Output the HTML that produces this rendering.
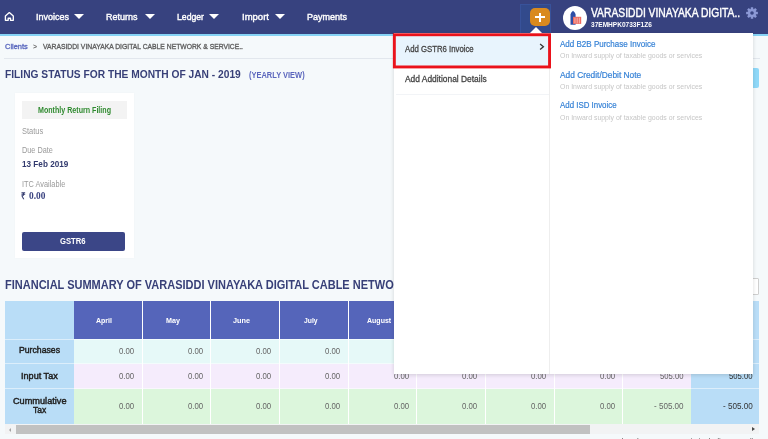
<!DOCTYPE html>
<html><head><meta charset="utf-8"><title>GSTR6 Dashboard</title>
<style>
*{box-sizing:border-box;margin:0;padding:0}
html,body{width:768px;height:439px;overflow:hidden}
body{background:#f5f9fb;font-family:"Liberation Sans",sans-serif;position:relative}
#root{position:absolute;left:0;top:0;width:768px;height:439px;overflow:hidden;will-change:transform}
.a{position:absolute}
.t{position:absolute;white-space:nowrap;line-height:1;transform-origin:0 50%;font-weight:bold}
.tri{position:absolute;width:0;height:0;border-left:5.2px solid transparent;border-right:5.2px solid transparent;border-top:5.8px solid #fff;top:14px}
</style></head><body>
<div id="root">
<div class="a" style="left:0;top:0;width:768px;height:33.7px;background:#37427f"></div>
<div class="a" style="left:0;top:33.7px;width:768px;height:2.8px;background:#86d3f5"></div>
<svg class="a" style="left:3px;top:10px" width="13" height="13" viewBox="3 10 13 13"><path d="M5.4 20.3 V16 L9.35 12.6 L13.3 16 V20.3 H10.5 V18.2 H8.2 V20.3 Z" fill="none" stroke="#fff" stroke-width="1.35" stroke-linejoin="round"/></svg>
<div class="tri" style="left:74px"></div>
<div class="tri" style="left:144.5px"></div>
<div class="tri" style="left:209px"></div>
<div class="tri" style="left:275px"></div>
<div class="a" style="left:520px;top:4px;width:31.4px;height:30px;background:#324a8c;border:1px solid #38529a;border-bottom:0"></div>
<div class="a" style="left:530px;top:7.8px;width:20px;height:18.6px;background:#d98a1e;border-radius:5px"></div>
<div class="a" style="left:535.3px;top:16.1px;width:9.8px;height:2.2px;background:#fff"></div>
<div class="a" style="left:539.1px;top:12.8px;width:2.2px;height:8.8px;background:#fff"></div>
<div class="a" style="left:563.4px;top:6.1px;width:24px;height:24px;border-radius:50%;background:#fff"></div>
<svg class="a" style="left:563.4px;top:6.1px" width="24" height="24" viewBox="563.4 6.1 24 24"><path d="M570.9 24.8 V14.6 Q570.9 13 573.4 10.9 Q576 13 576 14.6 V24.8 Z" fill="#2f4ea6"/><rect x="573.4" y="16.9" width="8.2" height="7.1" fill="#ee6a5f"/><rect x="574.9" y="17.8" width="0.9" height="5.6" fill="#fff" opacity=".55"/><rect x="577.1" y="17.8" width="0.9" height="5.6" fill="#fff" opacity=".55"/><rect x="579.3" y="17.8" width="0.9" height="5.6" fill="#fff" opacity=".55"/></svg>
<svg class="a" style="left:745.6px;top:6.7px" width="12" height="12" viewBox="-6 -6 12 12"><g fill="#8c99d6"><rect x="-1.25" y="-5.85" width="2.5" height="3" rx=".5" transform="rotate(0)"/><rect x="-1.25" y="-5.85" width="2.5" height="3" rx=".5" transform="rotate(45)"/><rect x="-1.25" y="-5.85" width="2.5" height="3" rx=".5" transform="rotate(90)"/><rect x="-1.25" y="-5.85" width="2.5" height="3" rx=".5" transform="rotate(135)"/><rect x="-1.25" y="-5.85" width="2.5" height="3" rx=".5" transform="rotate(180)"/><rect x="-1.25" y="-5.85" width="2.5" height="3" rx=".5" transform="rotate(225)"/><rect x="-1.25" y="-5.85" width="2.5" height="3" rx=".5" transform="rotate(270)"/><rect x="-1.25" y="-5.85" width="2.5" height="3" rx=".5" transform="rotate(315)"/><circle r="4.1"/></g><circle r="1.8" fill="#3a4684"/></svg>
<div class="a" style="left:4px;top:57.8px;width:756px;height:1px;background:#e2e7ed"></div>
<div class="a" style="left:15px;top:93.4px;width:119.2px;height:164.2px;background:#fff;box-shadow:0 0 2px rgba(120,140,160,.04)"></div>
<div class="a" style="left:21.7px;top:101px;width:105.3px;height:17.5px;background:#f3f3f3"></div>
<div class="a" style="left:21.7px;top:232.3px;width:103.3px;height:18.3px;background:#3b4687;border-radius:2px"></div>
<div class="a" style="left:753px;top:68px;width:6px;height:20px;background:#8fd8f8;border-radius:0 2px 2px 0"></div>
<div class="a" style="left:700px;top:278px;width:59.3px;height:17px;background:#fff;border:1px solid #cfcfcf;border-radius:1px"></div>
<div class="a" style="left:5px;top:301px;width:68.5px;height:122.7px;background:#b9ddf7"></div>
<div class="a" style="left:73.5px;top:301px;width:685.5px;height:38.0px;background:#5565ba"></div>
<div class="a" style="left:73.5px;top:339.0px;width:685.5px;height:24.8px;background:#e6f9f8"></div>
<div class="a" style="left:73.5px;top:363.8px;width:685.5px;height:24.9px;background:#f5ecfc"></div>
<div class="a" style="left:73.5px;top:388.7px;width:685.5px;height:35.0px;background:#dcf6dc"></div>
<div class="a" style="left:691.4px;top:301px;width:67.6px;height:122.7px;background:#b9ddf7"></div>
<div class="a" style="left:5px;top:338.5px;width:754px;height:1px;background:rgba(255,255,255,.5)"></div>
<div class="a" style="left:5px;top:363.3px;width:754px;height:1px;background:rgba(255,255,255,.5)"></div>
<div class="a" style="left:5px;top:388.2px;width:754px;height:1px;background:rgba(255,255,255,.5)"></div>
<div class="a" style="left:141.7px;top:301px;width:1px;height:122.7px;background:#fff"></div>
<div class="a" style="left:210.3px;top:301px;width:1px;height:122.7px;background:#fff"></div>
<div class="a" style="left:279.0px;top:301px;width:1px;height:122.7px;background:#fff"></div>
<div class="a" style="left:347.6px;top:301px;width:1px;height:122.7px;background:#fff"></div>
<div class="a" style="left:416.2px;top:301px;width:1px;height:122.7px;background:#fff"></div>
<div class="a" style="left:484.9px;top:301px;width:1px;height:122.7px;background:#fff"></div>
<div class="a" style="left:553.6px;top:301px;width:1px;height:122.7px;background:#fff"></div>
<div class="a" style="left:622.2px;top:301px;width:1px;height:122.7px;background:#fff"></div>
<div class="a" style="left:5px;top:423.7px;width:754px;height:10.8px;background:#f2f3f4"></div>
<div class="a" style="left:16.1px;top:425.1px;width:574px;height:8.7px;background:#c1c1c1"></div>
<div class="a" style="left:9.2px;top:427.5px;width:0;height:0;border-top:2.2px solid transparent;border-bottom:2.2px solid transparent;border-right:2.6px solid #a3a3a3"></div>
<div class="a" style="left:752.3px;top:426.6px;width:0;height:0;border-top:2.8px solid transparent;border-bottom:2.8px solid transparent;border-left:3px solid #484848"></div>
<div class="t" id="n1" style="left:36.00px;top:12.01px;font-size:9.5px;color:#fff;font-weight:normal;-webkit-text-stroke:.4px #fff;transform:scaleX(0.9467);">Invoices</div>
<div class="t" id="n2" style="left:106.00px;top:12.01px;font-size:9.5px;color:#fff;font-weight:normal;-webkit-text-stroke:.4px #fff;transform:scaleX(0.9469);">Returns</div>
<div class="t" id="n3" style="left:177.00px;top:12.01px;font-size:9.5px;color:#fff;font-weight:normal;-webkit-text-stroke:.4px #fff;transform:scaleX(0.9124);">Ledger</div>
<div class="t" id="n4" style="left:242.00px;top:12.01px;font-size:9.5px;color:#fff;font-weight:normal;-webkit-text-stroke:.4px #fff;transform:scaleX(1.0023);">Import</div>
<div class="t" id="n5" style="left:307.00px;top:12.01px;font-size:9.5px;color:#fff;font-weight:normal;-webkit-text-stroke:.4px #fff;transform:scaleX(0.9467);">Payments</div>
<div class="t" id="cname" style="left:590.50px;top:7.02px;font-size:12.2px;color:#fff;font-weight:normal;-webkit-text-stroke:.42px #fff;transform:scaleX(0.8452);">VARASIDDI VINAYAKA DIGITA..</div>
<div class="t" id="gstin" style="left:590.50px;top:20.80px;font-size:7.4px;color:#fff;transform:scaleX(0.8862);">37EMHPK0733F1Z6</div>
<div class="t" id="b1" style="left:4.70px;top:43.20px;font-size:7.8px;color:#5c6abf;font-weight:normal;-webkit-text-stroke:.35px #5c6abf;transform:scaleX(0.9562);">Clients</div>
<div class="t" id="b2" style="left:33.30px;top:43.01px;font-size:7px;color:#666;transform:scaleX(0.9771);">&gt;</div>
<div class="t" id="b3" style="left:43.00px;top:43.20px;font-size:7.8px;color:#606060;font-weight:normal;-webkit-text-stroke:.35px #606060;transform:scaleX(0.8682);">VARASIDDI VINAYAKA DIGITAL CABLE NETWORK &amp; SERVICE..</div>
<div class="t" id="h1a" style="left:5.00px;top:68.51px;font-size:11.8px;color:#384078;transform:scaleX(0.8662);">FILING STATUS FOR THE MONTH OF JAN - 2019</div>
<div class="t" id="yv" style="left:248.75px;top:70.51px;font-size:8.7px;color:#5b66bd;transform:scaleX(0.8603);">(YEARLY VIEW)</div>
<div class="t" id="h1b" style="left:5.00px;top:279.11px;font-size:12.8px;color:#384078;transform:scaleX(0.8601);">FINANCIAL SUMMARY OF VARASIDDI VINAYAKA DIGITAL CABLE NETWORK &amp; SERVICES</div>
<div class="t" id="mrf" style="left:38.00px;top:105.71px;font-size:8.6px;color:#2f8a2f;transform:scaleX(0.8265);">Monthly Return Filing</div>
<div class="t" id="st" style="left:21.70px;top:128.21px;font-size:8.2px;color:#9a9a9a;font-weight:normal;transform:scaleX(0.9174);">Status</div>
<div class="t" id="ddl" style="left:21.70px;top:147.21px;font-size:8.2px;color:#9a9a9a;font-weight:normal;transform:scaleX(0.8903);">Due Date</div>
<div class="t" id="dd" style="left:21.70px;top:158.90px;font-size:9.5px;color:#323a6e;transform:scaleX(0.8594);">13 Feb 2019</div>
<div class="t" id="itl" style="left:21.70px;top:180.71px;font-size:8.2px;color:#9a9a9a;font-weight:normal;transform:scaleX(0.9003);">ITC Available</div>
<div class="t" id="itc1" style="left:21.20px;top:191.76px;font-size:9.2px;color:#323a6e;transform:scaleX(0.8800);">₹</div>
<div class="t" id="itc2" style="left:29.00px;top:190.76px;font-size:10.4px;color:#3a4380;font-family:'Liberation Serif','DejaVu Serif',serif;transform:scaleX(0.9017);">0.00</div>
<div class="t" id="gbtn" style="left:60.40px;top:237.41px;font-size:8.8px;color:#fff;transform:scaleX(0.8724);">GSTR6</div>
<div class="t" id="mo0" style="left:96.00px;top:316.52px;font-size:8.1px;color:#fff;transform:scaleX(0.8678);">April</div>
<div class="t" id="mo1" style="left:166.25px;top:316.52px;font-size:8.1px;color:#fff;transform:scaleX(0.8857);">May</div>
<div class="t" id="mo2" style="left:233.00px;top:316.52px;font-size:8.1px;color:#fff;transform:scaleX(0.8992);">June</div>
<div class="t" id="mo3" style="left:303.60px;top:316.52px;font-size:8.1px;color:#fff;transform:scaleX(0.8393);">July</div>
<div class="t" id="mo4" style="left:366.70px;top:316.52px;font-size:8.1px;color:#fff;transform:scaleX(0.8682);">August</div>
<div class="t" id="mx0" style="left:431.78px;top:316.52px;font-size:8.1px;color:#fff;transform:scaleX(0.7647);">September</div>
<div class="t" id="mx1" style="left:500.43px;top:316.52px;font-size:8.1px;color:#fff;transform:scaleX(1.0307);">October</div>
<div class="t" id="mx2" style="left:569.08px;top:316.52px;font-size:8.1px;color:#fff;transform:scaleX(0.8082);">November</div>
<div class="t" id="mx3" style="left:637.73px;top:316.52px;font-size:8.1px;color:#fff;transform:scaleX(0.8172);">December</div>
<div class="t" id="r1" style="left:19.00px;top:346.41px;font-size:9.1px;color:#222;font-weight:normal;-webkit-text-stroke:.45px #222;transform:scaleX(0.9542);">Purchases</div>
<div class="t" id="r2" style="left:21.20px;top:371.91px;font-size:9.1px;color:#222;font-weight:normal;-webkit-text-stroke:.45px #222;transform:scaleX(1.0014);">Input Tax</div>
<div class="t" id="r3a" style="left:12.50px;top:396.80px;font-size:9.1px;color:#222;font-weight:normal;-webkit-text-stroke:.45px #222;transform:scaleX(1.0082);">Cummulative</div>
<div class="t" id="r3b" style="left:32.90px;top:406.41px;font-size:9.1px;color:#222;font-weight:normal;-webkit-text-stroke:.45px #222;transform:scaleX(0.9325);">Tax</div>
<div class="t" id="va0" style="left:118.95px;top:347.01px;font-size:8.3px;color:#666;font-weight:normal;transform:scaleX(0.9408);">0.00</div>
<div class="t" id="va1" style="left:187.60px;top:347.01px;font-size:8.3px;color:#666;font-weight:normal;transform:scaleX(0.9408);">0.00</div>
<div class="t" id="va2" style="left:256.25px;top:347.01px;font-size:8.3px;color:#666;font-weight:normal;transform:scaleX(0.9408);">0.00</div>
<div class="t" id="va3" style="left:324.90px;top:347.01px;font-size:8.3px;color:#666;font-weight:normal;transform:scaleX(0.9408);">0.00</div>
<div class="t" id="va4" style="left:393.55px;top:347.01px;font-size:8.3px;color:#666;font-weight:normal;transform:scaleX(0.9408);">0.00</div>
<div class="t" id="va5" style="left:462.20px;top:347.01px;font-size:8.3px;color:#666;font-weight:normal;transform:scaleX(0.9408);">0.00</div>
<div class="t" id="va6" style="left:530.85px;top:347.01px;font-size:8.3px;color:#666;font-weight:normal;transform:scaleX(0.9408);">0.00</div>
<div class="t" id="va7" style="left:599.50px;top:347.01px;font-size:8.3px;color:#666;font-weight:normal;transform:scaleX(0.9408);">0.00</div>
<div class="t" id="va8" style="left:659.85px;top:347.01px;font-size:8.3px;color:#666;font-weight:normal;transform:scaleX(0.9255);">505.00</div>
<div class="t" id="va9" style="left:728.70px;top:347.01px;font-size:8.3px;color:#333;font-weight:normal;transform:scaleX(0.9295);">505.00</div>
<div class="t" id="vb0" style="left:118.95px;top:372.01px;font-size:8.3px;color:#666;font-weight:normal;transform:scaleX(0.9408);">0.00</div>
<div class="t" id="vb1" style="left:187.60px;top:372.01px;font-size:8.3px;color:#666;font-weight:normal;transform:scaleX(0.9408);">0.00</div>
<div class="t" id="vb2" style="left:256.25px;top:372.01px;font-size:8.3px;color:#666;font-weight:normal;transform:scaleX(0.9408);">0.00</div>
<div class="t" id="vb3" style="left:324.90px;top:372.01px;font-size:8.3px;color:#666;font-weight:normal;transform:scaleX(0.9408);">0.00</div>
<div class="t" id="vb4" style="left:393.55px;top:372.01px;font-size:8.3px;color:#666;font-weight:normal;transform:scaleX(0.9408);">0.00</div>
<div class="t" id="vb5" style="left:462.20px;top:372.01px;font-size:8.3px;color:#666;font-weight:normal;transform:scaleX(0.9408);">0.00</div>
<div class="t" id="vb6" style="left:530.85px;top:372.01px;font-size:8.3px;color:#666;font-weight:normal;transform:scaleX(0.9408);">0.00</div>
<div class="t" id="vb7" style="left:599.50px;top:372.01px;font-size:8.3px;color:#666;font-weight:normal;transform:scaleX(0.9408);">0.00</div>
<div class="t" id="vb8" style="left:659.85px;top:372.01px;font-size:8.3px;color:#666;font-weight:normal;transform:scaleX(0.9255);">505.00</div>
<div class="t" id="vb9" style="left:728.70px;top:372.01px;font-size:8.3px;color:#333;font-weight:normal;transform:scaleX(0.9295);">505.00</div>
<div class="t" id="vc0" style="left:118.95px;top:402.22px;font-size:8.3px;color:#666;font-weight:normal;transform:scaleX(0.9408);">0.00</div>
<div class="t" id="vc1" style="left:187.60px;top:402.22px;font-size:8.3px;color:#666;font-weight:normal;transform:scaleX(0.9408);">0.00</div>
<div class="t" id="vc2" style="left:256.25px;top:402.22px;font-size:8.3px;color:#666;font-weight:normal;transform:scaleX(0.9408);">0.00</div>
<div class="t" id="vc3" style="left:324.90px;top:402.22px;font-size:8.3px;color:#666;font-weight:normal;transform:scaleX(0.9408);">0.00</div>
<div class="t" id="vc4" style="left:393.55px;top:402.22px;font-size:8.3px;color:#666;font-weight:normal;transform:scaleX(0.9408);">0.00</div>
<div class="t" id="vc5" style="left:462.20px;top:402.22px;font-size:8.3px;color:#666;font-weight:normal;transform:scaleX(0.9408);">0.00</div>
<div class="t" id="vc6" style="left:530.85px;top:402.22px;font-size:8.3px;color:#666;font-weight:normal;transform:scaleX(0.9408);">0.00</div>
<div class="t" id="vc7" style="left:599.50px;top:402.22px;font-size:8.3px;color:#666;font-weight:normal;transform:scaleX(0.9408);">0.00</div>
<div class="t" id="vc8" style="left:653.75px;top:402.22px;font-size:8.3px;color:#666;font-weight:normal;transform:scaleX(0.9720);">- 505.00</div>
<div class="t" id="vc9" style="left:722.50px;top:402.22px;font-size:8.3px;color:#333;font-weight:normal;transform:scaleX(0.9786);">- 505.00</div>
<div class="t" id="note" style="left:594.00px;top:437.91px;font-size:8.3px;color:#555;font-weight:normal;transform:scaleX(0.9463);">Note : The above summary is including Supplies</div>
<div class="a" style="left:394.4px;top:33.3px;width:358.5px;height:340.6px;background:#fff;box-shadow:0 1px 4px rgba(0,0,0,.15)"></div>
<div class="a" style="left:530.3px;top:27.3px;width:0;height:0;border-left:6px solid transparent;border-right:6px solid transparent;border-bottom:6.2px solid #fff"></div>
<div class="a" style="left:549px;top:33.3px;width:1px;height:340.6px;background:#eeeeee"></div>
<svg class="a" style="left:390px;top:30px" width="164" height="42" viewBox="390 30 164 42"><rect x="394.35" y="34.75" width="155.2" height="32.2" fill="#e8f4fd" stroke="#ea121b" stroke-width="2.9"/></svg>
<svg class="a" style="left:539px;top:43px" width="6" height="8" viewBox="0 0 6 8"><path d="M1.1 1 L4.4 3.7 L1.1 6.4" fill="none" stroke="#333" stroke-width="1.3"/></svg>
<div class="a" style="left:396px;top:93.5px;width:153px;height:1px;background:#f2f4f7"></div>
<div class="t" id="m1" style="left:405.00px;top:45.11px;font-size:9.3px;color:#444;font-weight:normal;-webkit-text-stroke:.3px #444;transform:scaleX(0.8361);">Add GSTR6 Invoice</div>
<div class="t" id="m2" style="left:405.00px;top:75.00px;font-size:9.3px;color:#444;font-weight:normal;-webkit-text-stroke:.3px #444;transform:scaleX(0.9032);">Add Additional Details</div>
<div class="t" id="s1" style="left:560.00px;top:40.01px;font-size:9.0px;color:#3682d6;font-weight:normal;-webkit-text-stroke:.2px #3682d6;transform:scaleX(0.8909);">Add B2B Purchase Invoice</div>
<div class="t" id="s1b" style="left:560.00px;top:52.30px;font-size:7.2px;color:#c6c6c6;font-weight:normal;transform:scaleX(0.9653);">On Inward supply of taxable goods or services</div>
<div class="t" id="s2" style="left:560.00px;top:70.61px;font-size:9.0px;color:#3682d6;font-weight:normal;-webkit-text-stroke:.2px #3682d6;transform:scaleX(0.9275);">Add Credit/Debit Note</div>
<div class="t" id="s2b" style="left:560.00px;top:82.91px;font-size:7.2px;color:#c6c6c6;font-weight:normal;transform:scaleX(0.9653);">On Inward supply of taxable goods or services</div>
<div class="t" id="s3" style="left:560.00px;top:101.20px;font-size:9.0px;color:#3682d6;font-weight:normal;-webkit-text-stroke:.2px #3682d6;transform:scaleX(0.8769);">Add ISD Invoice</div>
<div class="t" id="s3b" style="left:560.00px;top:113.50px;font-size:7.2px;color:#c6c6c6;font-weight:normal;transform:scaleX(0.9653);">On Inward supply of taxable goods or services</div>
</div>
</body></html>
